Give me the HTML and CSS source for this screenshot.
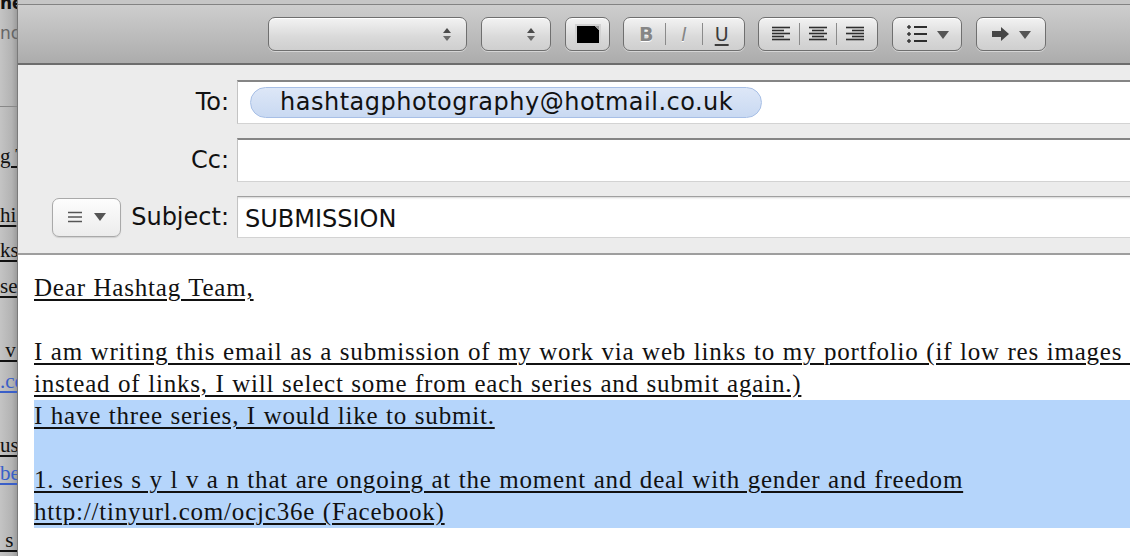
FILE: index.html
```html
<!DOCTYPE html>
<html>
<head>
<meta charset="utf-8">
<link rel="stylesheet" href="styles.css">
</head>
<body>
<div class="screen">
  <aside class="behind">
    <div class="frag frag-bold">ne</div>
    <div class="frag frag-gray">nc</div>
    <div class="frag-rule"></div>
    <div class="frag frag-serif">g T</div>
    <div class="frag frag-serif">hi</div>
    <div class="frag frag-serif">ks.</div>
    <div class="frag frag-serif">ser</div>
    <div class="frag frag-serif">&nbsp;v&nbsp;</div>
    <div class="frag frag-serif frag-link">.co</div>
    <div class="frag frag-serif">us</div>
    <div class="frag frag-serif frag-link">be</div>
    <div class="frag frag-serif">&nbsp;s&nbsp;</div>
  </aside>

  <main class="win">
    <div class="titlebar"></div>

    <div class="toolbar">
      <div class="btn popup popup-font">
        <svg class="stepper" viewBox="0 0 10 15" width="10" height="15"><polygon points="1,6 5,1 9,6" fill="#4a4a4a"/><polygon points="1,9 5,14 9,9" fill="#6a6a6a"/></svg>
      </div>
      <div class="btn popup popup-size">
        <svg class="stepper" viewBox="0 0 10 15" width="10" height="15"><polygon points="1,6 5,1 9,6" fill="#4a4a4a"/><polygon points="1,9 5,14 9,9" fill="#6a6a6a"/></svg>
      </div>
      <div class="btn color-btn"><span class="swatch"></span></div>
      <div class="btn seg seg-style">
        <span class="seg-item style-b">B</span>
        <span class="seg-sep"></span>
        <span class="seg-item style-i">I</span>
        <span class="seg-sep"></span>
        <span class="seg-item style-u">U</span>
      </div>
      <div class="btn seg seg-align">
        <span class="seg-item">
          <svg viewBox="0 0 18 16" width="18" height="16"><g stroke="#2e2e2e" stroke-width="1.6"><line x1="0" y1="1.5" x2="18" y2="1.5"/><line x1="0" y1="4.5" x2="12" y2="4.5"/><line x1="0" y1="7.5" x2="18" y2="7.5"/><line x1="0" y1="10.5" x2="12" y2="10.5"/><line x1="0" y1="13.5" x2="18" y2="13.5"/></g></svg>
        </span>
        <span class="seg-sep"></span>
        <span class="seg-item">
          <svg viewBox="0 0 18 16" width="18" height="16"><g stroke="#2e2e2e" stroke-width="1.6"><line x1="0" y1="1.5" x2="18" y2="1.5"/><line x1="3" y1="4.5" x2="15" y2="4.5"/><line x1="0" y1="7.5" x2="18" y2="7.5"/><line x1="3" y1="10.5" x2="15" y2="10.5"/><line x1="0" y1="13.5" x2="18" y2="13.5"/></g></svg>
        </span>
        <span class="seg-sep"></span>
        <span class="seg-item">
          <svg viewBox="0 0 18 16" width="18" height="16"><g stroke="#2e2e2e" stroke-width="1.6"><line x1="0" y1="1.5" x2="18" y2="1.5"/><line x1="6" y1="4.5" x2="18" y2="4.5"/><line x1="0" y1="7.5" x2="18" y2="7.5"/><line x1="6" y1="10.5" x2="18" y2="10.5"/><line x1="0" y1="13.5" x2="18" y2="13.5"/></g></svg>
        </span>
      </div>
      <div class="btn menu-btn">
        <svg viewBox="0 0 22 20" width="22" height="20"><g stroke="#2e2e2e" stroke-width="1.4"><line x1="1" y1="3" x2="5" y2="3"/><line x1="3" y1="1" x2="3" y2="5"/><line x1="1" y1="10" x2="5" y2="10"/><line x1="3" y1="8" x2="3" y2="12"/><line x1="1" y1="17" x2="5" y2="17"/><line x1="3" y1="15" x2="3" y2="19"/></g><g stroke="#2e2e2e" stroke-width="2"><line x1="8" y1="3" x2="21" y2="3"/><line x1="8" y1="10" x2="21" y2="10"/><line x1="8" y1="17" x2="21" y2="17"/></g></svg>
        <svg class="tri" viewBox="0 0 12 10" width="12" height="10"><polygon points="0,1 12,1 6,9" fill="#555"/></svg>
      </div>
      <div class="btn menu-btn">
        <svg viewBox="0 0 18 16" width="18" height="16"><polygon points="0,5 9,5 9,1 17,8 9,15 9,11 0,11" fill="#474747"/></svg>
        <svg class="tri" viewBox="0 0 12 10" width="12" height="10"><polygon points="0,1 12,1 6,9" fill="#555"/></svg>
      </div>
    </div>

    <div class="header">
      <div class="hrow">
        <div class="hlabel">To:</div>
        <div class="field">
          <span class="token">hashtagphotography@hotmail.co.uk</span>
        </div>
      </div>
      <div class="hrow">
        <div class="hlabel">Cc:</div>
        <div class="field"></div>
      </div>
      <div class="hrow hrow-subject">
        <div class="hlabel">
          <div class="fmt-btn">
            <svg viewBox="0 0 14 12" width="14" height="12"><g stroke="#555" stroke-width="1.5"><line x1="0" y1="1.5" x2="14" y2="1.5"/><line x1="0" y1="6" x2="14" y2="6"/><line x1="0" y1="10.5" x2="14" y2="10.5"/></g></svg>
            <svg viewBox="0 0 12 10" width="12" height="10"><polygon points="0,1 12,1 6,9" fill="#555"/></svg>
          </div>
          <span>Subject:</span>
        </div>
        <div class="field field-subject">SUBMISSION</div>
      </div>
    </div>

    <div class="body">
      <div class="line"><u>Dear Hashtag Team,</u></div>
      <div class="line"></div>
      <div class="line"><u>I am writing this email as a submission of my work via web links to my portfolio (if low res images are preferred</u></div>
      <div class="line"><u>instead of links, I will select some from each series and submit again.)</u></div>
      <div class="selected">
        <div class="line"><u>I have three series, I would like to submit.</u></div>
        <div class="line"></div>
        <div class="line"><u>1. series s y l v a n that are ongoing at the moment and deal with gender and freedom</u></div>
        <div class="line"><u>http://tinyurl.com/ocjc36e (Facebook)</u></div>
      </div>
    </div>
  </main>
</div>
</body>
</html>
```

FILE: styles.css
```css
html, body {
  margin: 0;
  padding: 0;
  width: 1130px;
  height: 556px;
  overflow: hidden;
  background: #ffffff;
}

.screen {
  display: flex;
  height: 556px;
}

/* window behind, mostly covered */
.behind {
  width: 17px;
  flex: none;
  border-right: 1px solid #7a7a7a;
  background: linear-gradient(to right, #c4c4c4, #b3b3b3 70%, #9c9c9c);
  overflow: hidden;
  display: grid;
  grid-template-rows: 30px 81px 40px 59px 35px 36px 64px 31px 64px 28px 67px 26px;
  margin-top: -5px;
  height: 561px;
}

.frag {
  white-space: nowrap;
  align-self: start;
}

.frag-bold {
  font-family: "DejaVu Sans", sans-serif;
  font-weight: bold;
  font-size: 17px;
  line-height: 16px;
  color: #111;
}

.frag-gray {
  font-family: "DejaVu Sans", sans-serif;
  font-size: 17px;
  line-height: 17px;
  color: #666;
}

.frag-rule {
  height: 1px;
  background: #888;
  align-self: start;
}

.frag-serif {
  font-family: "Liberation Serif", serif;
  font-size: 21px;
  line-height: 20px;
  color: #111;
  text-decoration: underline;
  text-decoration-thickness: 2px;
  text-underline-offset: 3px;
}

.frag-link {
  color: #3a5fc8;
}

/* main compose window */
.win {
  flex: 1;
  min-width: 0;
  display: flex;
  flex-direction: column;
  overflow: hidden;
}

.titlebar {
  height: 4px;
  background: #c6c6c6;
  border-bottom: 1px solid #838383;
}

.toolbar {
  height: 58px;
  background: linear-gradient(#cecece, #acacac);
  border-bottom: 2px solid #6d6d6d;
  display: flex;
  align-items: center;
  padding-left: 250px;
}

.btn {
  height: 34px;
  box-sizing: border-box;
  border: 1px solid #6f6f6f;
  border-radius: 7px;
  background: linear-gradient(#f3f3f3, #d9d9d9 60%, #cfcfcf);
  box-shadow: 0 1px 0 rgba(255, 255, 255, 0.45), inset 0 1px 0 #ffffff;
  display: flex;
  align-items: center;
  flex: none;
}

.popup {
  justify-content: flex-end;
  padding-right: 14px;
}

.popup-font {
  width: 199px;
}

.popup-size {
  width: 70px;
  margin-left: 14px;
}

.color-btn {
  width: 45px;
  margin-left: 14px;
  justify-content: center;
}

.swatch {
  width: 22px;
  height: 17px;
  background:
    linear-gradient(225deg, #9a9a9a 0 3px, transparent 3px),
    #000000;
  border: 2px solid #d2d2d2;
}

.seg {
  margin-left: 13px;
  padding: 0 4px;
}

.seg-style {
  width: 122px;
}

.seg-align {
  width: 120px;
  margin-left: 13px;
}

.seg-item {
  flex: 1;
  display: flex;
  align-items: center;
  justify-content: center;
  font-family: "DejaVu Sans", sans-serif;
  font-size: 19px;
}

.seg-sep {
  width: 1px;
  height: 22px;
  background: #8a8a8a;
  flex: none;
}

.style-b {
  font-weight: bold;
  color: #868686;
  text-shadow: 0 1px 0 #ffffff;
}

.style-i {
  font-style: italic;
  color: #868686;
  text-shadow: 0 1px 0 #ffffff;
}

.style-u {
  color: #3c3c3c;
  text-decoration: underline;
  text-decoration-thickness: 2px;
  text-underline-offset: 3px;
}

.menu-btn {
  width: 70px;
  margin-left: 14px;
  justify-content: center;
  gap: 9px;
}

.menu-btn .tri {
  margin-top: 1px;
}

/* header fields */
.header {
  background: #ececec;
  padding: 15px 0 15px 0;
  border-bottom: 2px solid #9e9e9e;
  display: flex;
  flex-direction: column;
  gap: 14px;
  font-family: "DejaVu Sans", sans-serif;
  font-size: 24px;
  color: #111;
}

.hrow {
  display: flex;
  align-items: center;
  height: 44px;
}

.hrow-subject {
  height: 42px;
}

.hlabel {
  width: 211px;
  flex: none;
  display: flex;
  justify-content: flex-end;
  align-items: center;
  gap: 10px;
}

.field {
  flex: 1;
  height: 100%;
  box-sizing: border-box;
  margin-left: 8px;
  margin-right: -4px;
  background: #ffffff;
  border-top: 2px solid #858585;
  border-left: 1px solid #c3c3c3;
  border-right: 1px solid #c3c3c3;
  border-bottom: 1px solid #d3d3d3;
  display: flex;
  align-items: center;
}

.field-subject {
  border-top: 1px solid #a0a0a0;
  box-shadow: inset 0 2px 2px -1px #d6d6d6;
  padding-left: 7px;
  padding-top: 4px;
}

.token {
  margin-left: 12px;
  height: 31px;
  box-sizing: border-box;
  padding: 0 28px 0 29px;
  border: 1px solid #a7bfe6;
  border-radius: 16px;
  background: linear-gradient(#dde7f7, #c9d9f2);
  line-height: 29px;
  letter-spacing: 0.5px;
}

.fmt-btn {
  width: 69px;
  height: 39px;
  box-sizing: border-box;
  border: 1px solid #a9a9a9;
  border-radius: 7px;
  background: linear-gradient(#fdfdfd, #ececec);
  box-shadow: 0 1px 1px rgba(0, 0, 0, 0.12);
  display: flex;
  align-items: center;
  justify-content: center;
  gap: 12px;
}

/* message body */
.body {
  flex: 1;
  background: #ffffff;
  padding: 17px 0 0 16px;
  font-family: "Liberation Serif", serif;
  font-size: 25px;
  line-height: 32px;
  letter-spacing: 0.8px;
  word-spacing: 0.6px;
  color: #111;
}

.line {
  height: 32px;
  white-space: nowrap;
}

.line u {
  text-decoration-thickness: 2px;
  text-underline-offset: 3px;
}

.selected {
  background: #b5d5fb;
  margin-right: -10px;
}
```
